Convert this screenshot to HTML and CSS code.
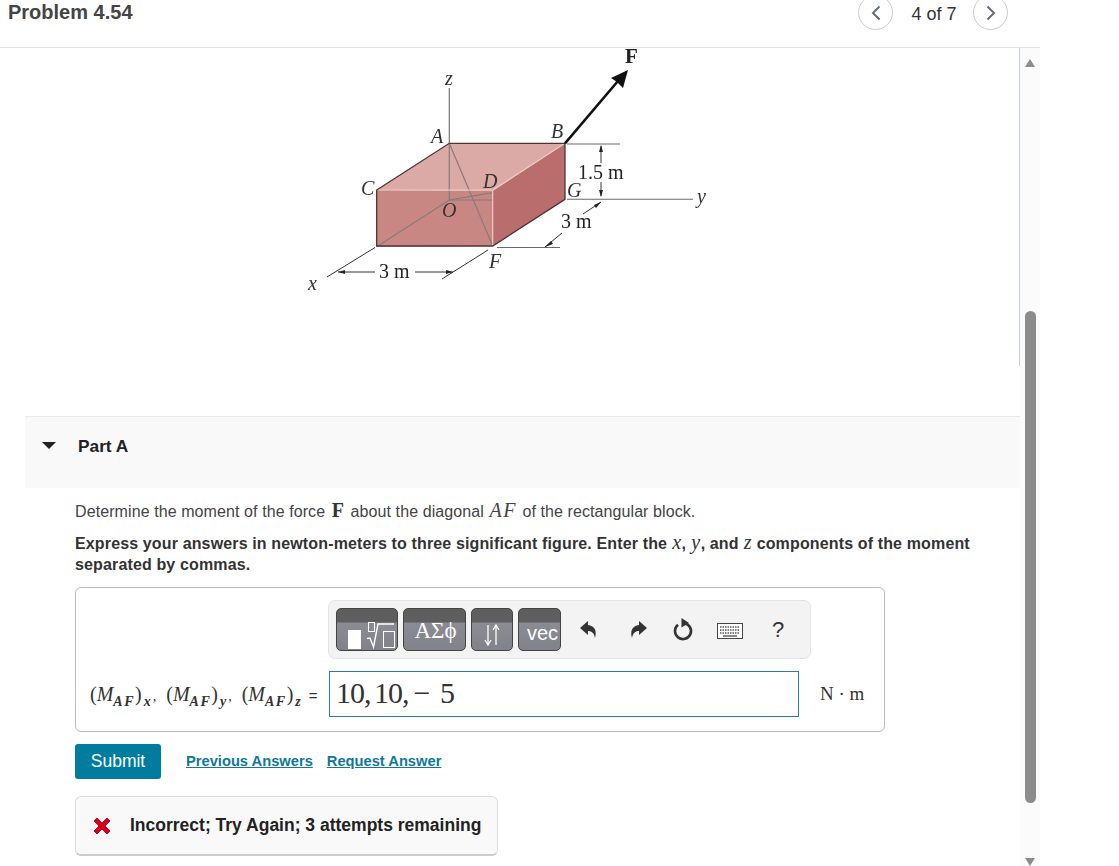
FILE: index.html
```html
<!DOCTYPE html>
<html lang="en">
<head>
    <meta charset="UTF-8">
    <title>Problem 4.54</title>
    <link rel="stylesheet" href="styles.css">
</head>
<body>

<div class="page">
    <header class="top-bar">
        <h1>Problem 4.54</h1>
        <div class="pager">
            <a class="pager-btn">
                <svg width="12" height="16" viewBox="0 0 12 16"><path d="M9.5 1.5 3 8l6.500 6.500" fill="none" stroke="#666d75" stroke-width="2"/></svg>
            </a>
            <span class="pager-text">4 of 7</span>
            <a class="pager-btn">
                <svg width="12" height="16" viewBox="0 0 12 16"><path d="M2.500 1.500 9 8l-6.500 6.500" fill="none" stroke="#666d75" stroke-width="2"/></svg>
            </a>
        </div>
    </header>

    <div class="content">
        <main class="main">
            <!-- Figura del bloque -->
            <div class="figure">
                <svg class="figure-svg" width="430" height="260" viewBox="290 48 430 260">
                    <polygon points="449.300,143.300 565,143.300 492.700,191 376.700,190" fill="#dcaaa6"/>
                    <polygon points="376.700,190 492.700,191 492.700,246 376.700,246.700" fill="#c98783"/>

                    <g stroke="#857c7b" stroke-width="1.200" fill="none">
                        <path d="M449.300 143.300V200"/>
                        <path d="M449.300 143.300 492.700 246"/>
                        <path d="M376.700 246.700 449.300 200 492.700 192.700"/>
                        <path d="M449.300 200H492.700"/>
                    </g>
                    <polygon points="492.700,191 565,143.300 565,199.300 492.700,246" fill="#b96d6c"/>
                    <g stroke="#ecc9c5" stroke-width="1.200" fill="none">
                        <path d="M376.700 190H492.700L565 143.300"/>
                        <path d="M492.700 191V246"/>
                    </g>
                    <g stroke="#4d3434" stroke-width="1.300" fill="none">
                        <path d="M376.700 190 449.300 143.300H565V199.300L492.700 246H376.700Z"/>
                    </g>

                    <!-- Ejes y cotas -->
                    <g stroke="#6a6a6a" stroke-width="1.100" fill="none">
                        <path d="M449.300 88V143"/>
                        <path d="M567 199.300H693"/>
                        <path d="M567 144H620"/>
                        <path d="M497 247.500H560"/>
                    </g>
                    <g stroke="#333" stroke-width="1" fill="none">
                        <path d="M327 277 375 247.500"/>
                        <path d="M442 279 488 250"/>
                        <path d="M338 272H375"/>
                        <path d="M415 272H453"/>
                        <path d="M545 247 562 233"/>
                        <path d="M583 214 601 202"/>
                        <path d="M601 146V163"/>
                        <path d="M601 182V196"/>
                    </g>
                    <g fill="#222">
                        <polygon points="338,272 345,270 345,274"/>
                        <polygon points="453,272 446,270 446,274"/>
                        <polygon points="545,247 551,241 553,244"/>
                        <polygon points="601,202 594,205 596,208"/>
                        <polygon points="601,145 599,152 603,152"/>
                        <polygon points="601,197 599,190 603,190"/>
                    </g>

                    <path d="M565 143.300 618 81" stroke="#111" stroke-width="2.600" fill="none"/>
                    <polygon points="628,70 623,88 617,82 611,78" fill="#111"/>

                    <text class="fig-label" x="445" y="85">z</text>
                    <text class="fig-label" x="431" y="143">A</text>
                    <text class="fig-label" x="551" y="138">B</text>
                    <text class="fig-label" x="361" y="195">C</text>
                    <text class="fig-label" x="483" y="188">D</text>
                    <text class="fig-label" x="442" y="217">O</text>
                    <text class="fig-label" x="567" y="197">G</text>
                    <text class="fig-label" x="489" y="268">F</text>
                    <text class="fig-label" x="308" y="290">x</text>
                    <text class="fig-label" x="697" y="203">y</text>
                    <text class="fig-num" x="578" y="179">1.5 m</text>
                    <text class="fig-num" x="561" y="228">3 m</text>
                    <text class="fig-num" x="379" y="278">3 m</text>
                    <text class="fig-bold" x="625" y="63">F</text>
                </svg>
            </div>

            <section class="part">
                <div class="part-head">
                    <span class="caret"></span>
                    <h2>Part A</h2>
                </div>

                <div class="part-body">
                    <p class="question">Determine the moment of the force <b class="math-bold">F</b> about the diagonal <i class="math">AF</i> of the rectangular block.</p>
                    <p class="instructions">Express your answers in newton-meters to three significant figure. Enter the <i class="math">x</i>, <i class="math">y</i>, and <i class="math">z</i> components of the moment separated by commas.</p>

                    <div class="answer-box">
                        <div class="toolbar">
                            <button class="tool tool-root">
                                <svg width="60" height="41" viewBox="0 0 60 41">
                                    <rect x="11" y="21" width="13" height="19" fill="#fff"/>
                                    <rect x="31.500" y="13.500" width="6" height="9" fill="none" stroke="#fff"/>
                                    <path d="M30 29.500l3-.5 3.500 9L41 15h16" fill="none" stroke="#fff" stroke-width="1.400"/>
                                    <rect x="46.500" y="22.500" width="11" height="16" fill="none" stroke="#fff"/>
                                </svg>
                            </button>
                            <button class="tool tool-greek">ΑΣϕ</button>
                            <button class="tool tool-arrows">
                                <svg width="20" height="24" viewBox="0 0 20 24">
                                    <path d="M6 2V22M3 17l3 5 3-5M14 22V2M11 7l3-5 3 5" fill="none" stroke="#fff" stroke-width="1.300"/>
                                </svg>
                            </button>
                            <button class="tool tool-vec">vec</button>

                            <span class="action action-undo">
                                <svg width="18" height="20" viewBox="0 0 18 20"><path d="M8 1 0 8l8 7v-4c4 0 6 2 7 7 2-7 0-12-7-13z" fill="#333"/></svg>
                            </span>
                            <span class="action action-redo">
                                <svg width="18" height="20" viewBox="0 0 18 20"><path d="M10 1l8 7-8 7v-4c-4 0-6 2-7 7-2-7 0-12 7-13z" fill="#333"/></svg>
                            </span>
                            <span class="action action-reset">
                                <svg width="22" height="24" viewBox="0 0 22 24">
                                    <path d="M12.500 5.200A8 8 0 1 1 6 6.800" fill="none" stroke="#333" stroke-width="2.600"/>
                                    <polygon points="9.500,0 17,5 9.500,9.500" fill="#333"/>
                                </svg>
                            </span>
                            <span class="action action-keys">
                                <svg width="26" height="16" viewBox="0 0 26 16">
                                    <rect x="0.500" y="0.500" width="25" height="15" fill="#fff" stroke="#444"/>
                                    <path d="M3 4h20M3 7h20M3 10h20" stroke="#555" stroke-width="1.400" stroke-dasharray="1.500 1"/>
                                    <path d="M6 13h14" stroke="#555" stroke-width="1.400"/>
                                </svg>
                            </span>
                            <span class="action action-help">?</span>
                        </div>

                        <div class="answer-row">
                            <span class="answer-label">(<i>M</i><sub class="sub-af"><i>AF</i></sub>)<sub><i>x</i></sub><small>,</small> (<i>M</i><sub class="sub-af"><i>AF</i></sub>)<sub><i>y</i></sub><small>,</small> (<i>M</i><sub class="sub-af"><i>AF</i></sub>)<sub><i>z</i></sub> <span class="eq">=</span></span>
                            <div class="answer-input">10, 10,<span class="minus">−</span> 5</div>
                            <span class="answer-unit">N · m</span>
                        </div>
                    </div>

                    <div class="submit-row">
                        <button class="submit-btn">Submit</button>
                        <a class="link prev-link">Previous Answers</a>
                        <a class="link">Request Answer</a>
                    </div>

                    <div class="feedback">
                        <svg width="20" height="20" viewBox="0 0 20 20"><path d="M2 5 5 2l5 5 5-5 3 3-5 5 5 5-3 3-5-5-5 5-3-3 5-5z" fill="#d0021b" stroke="#d0021b" stroke-linejoin="round"/></svg>
                        <span>Incorrect; Try Again; 3 attempts remaining</span>
                    </div>
                </div>
            </section>
        </main>

        <!-- Barra de scroll -->
        <div class="scrollbar">
            <span class="arrow-up"></span>
            <span class="thumb"></span>
            <span class="arrow-down"></span>
        </div>
    </div>
</div>

</body>
</html>
```

FILE: styles.css
```css
/* Estilos generales */
html, body {
    margin: 0;
    padding: 0;
    height: 866px;
    overflow: hidden;
    background-color: #fff;
}
body {
    font-family: "Liberation Sans", Arial, sans-serif;
    color: #333;
}
.page {
    width: 1040px;
}

/* Cabecera */
.top-bar {
    height: 47px;
    border-bottom: 1px solid #dcdfe3;
    display: flex;
    justify-content: space-between;
    align-items: flex-start;
    padding-left: 8px;
    padding-right: 32px;
}
.top-bar h1 {
    font-size: 20px;
    line-height: 22px;
    margin: 1px 0 0;
    color: #444;
}
.pager {
    display: flex;
    align-items: center;
    margin-top: -5px;
}
.pager-btn {
    width: 33px;
    height: 33px;
    border: 1px solid #ccc;
    border-radius: 50%;
    display: flex;
    align-items: center;
    justify-content: center;
}
.pager-text {
    font-size: 18px;
    width: 78px;
    padding-left: 2px;
    text-align: center;
    margin-top: 4px;
}

.content {
    display: flex;
    height: 818px;
}
.main {
    width: 1020px;
}

/* Figura */
.figure {
    height: 318px;
    margin-bottom: 50px;
    padding-left: 290px;
    border-right: 1px solid #c3cfdb;
    box-sizing: border-box;
}
.figure-svg {
    display: block;
    filter: blur(0.3px);
}
.fig-label {
    font: italic 20px "Liberation Serif", serif;
    fill: #333;
}
.fig-num {
    font: 20px "Liberation Serif", serif;
    fill: #222;
}
.fig-bold {
    font: bold 21px "Liberation Serif", serif;
    fill: #222;
}

/* Parte A */
.part-head {
    margin-left: 25px;
    height: 71px;
    background-color: #f9f9f9;
    border-top: 1px solid #e8e8e8;
    display: flex;
    align-items: flex-start;
}
.caret {
    width: 0;
    height: 0;
    border-left: 7px solid transparent;
    border-right: 7px solid transparent;
    border-top: 7px solid #222;
    margin: 25px 0 0 17px;
}
.part-head h2 {
    font-size: 17.300px;
    line-height: 22px;
    margin: 18px 0 0 22px;
    color: #222;
}
.part-body {
    padding: 13px 0 0 75px;
}
.question {
    margin: 0;
    font-size: 16px;
    line-height: 22px;
    letter-spacing: 0.090px;
    color: #444;
}
.math {
    font-family: "Liberation Serif", serif;
    font-size: 20px;
    line-height: 0;
    letter-spacing: 1.500px;
    margin: 0 1px;
}
.math-bold {
    font-family: "Liberation Serif", serif;
    font-size: 20px;
    line-height: 0;
    color: #333;
    margin: 0 2px;
}
.instructions {
    margin: 10px 0 0;
    font-size: 16px;
    line-height: 21px;
    letter-spacing: 0.140px;
    font-weight: bold;
    width: 910px;
}
.instructions .math {
    font-weight: normal;
    letter-spacing: 0;
    margin: 0 0.500px;
}

/* Caja de respuesta */
.answer-box {
    width: 808px;
    height: 143px;
    margin-top: 12px;
    border: 1px solid #bbb;
    border-radius: 6px;
}
.toolbar {
    width: 474px;
    height: 57px;
    margin: 12px 0 0 252px;
    background-color: #f3f3f3;
    border: 1px solid #e4e4e4;
    border-radius: 7px;
    display: flex;
    align-items: center;
    padding-left: 7px;
}
.tool {
    height: 43px;
    padding: 0;
    margin-right: 5px;
    border: 1px solid #444;
    border-radius: 5px;
    background: linear-gradient(#5e5e5e 0, #5e5e5e 13px, #8b8b93 14px, #82828a 100%);
    color: #fff;
    display: flex;
    align-items: flex-end;
    justify-content: center;
}
.tool-root { width: 62px; }
.tool-greek {
    width: 63px;
    padding-left: 2px;
    font: 23px/38px "Liberation Serif", serif;
}
.tool-arrows {
    width: 42px;
    padding-bottom: 3px;
}
.tool-vec {
    width: 43px;
    padding-left: 6px;
    font: 20px/34px "Liberation Sans", sans-serif;
    margin-right: 0;
}
.action {
    display: flex;
    align-items: center;
    justify-content: center;
    color: #333;
}
.action-undo { margin-left: 19px; width: 18px; }
.action-redo { margin-left: 31px; width: 18px; }
.action-reset { margin-left: 25px; width: 22px; }
.action-keys { margin-left: 23px; width: 26px; margin-top: 2px; }
.action-help {
    margin-left: 29px;
    font-size: 22px;
}

.answer-row {
    display: flex;
    align-items: center;
    margin-top: 12px;
    padding-left: 14px;
}
.answer-label {
    font-family: "Liberation Serif", serif;
    font-size: 20px;
    width: 239px;
    white-space: nowrap;
    color: #333;
}
.answer-label sub {
    font-size: 14px;
    font-weight: bold;
    line-height: 0;
    margin-left: 2px;
}
.answer-label .sub-af {
    letter-spacing: 1.500px;
    margin-left: 0;
}
.answer-label small {
    font-size: 14px;
    margin: 0 5px 0 2px;
}
.eq {
    font-family: "Liberation Sans", sans-serif;
    font-size: 15px;
    margin-left: 3px;
}
.answer-input {
    width: 462px;
    height: 44px;
    border: 1px solid #2b7f98;
    padding-left: 6px;
    font: 30px/42px "Liberation Serif", serif;
    letter-spacing: -1px;
    word-spacing: -3px;
    color: #333;
}
.minus {
    margin: 0 7px 0 5px;
}
.answer-unit {
    font: 19px "Liberation Serif", serif;
    margin-left: 21px;
    color: #333;
}

/* Botones */
.submit-row {
    display: flex;
    align-items: center;
    margin-top: 12px;
}
.submit-btn {
    width: 86px;
    height: 35px;
    padding: 0;
    border: none;
    border-radius: 3px;
    background-color: #007c9e;
    color: #fff;
    font: 17.500px "Liberation Sans", sans-serif;
}
.link {
    font-size: 14.700px;
    font-weight: bold;
    color: #10789a;
    text-decoration: underline;
    margin-left: 14px;
    margin-top: -2px;
}
.prev-link {
    margin-left: 25px;
}

/* Mensaje */
.feedback {
    width: 421px;
    height: 57px;
    margin-top: 17px;
    background-color: #f9f9f9;
    border: 1px solid #ddd;
    border-bottom: 2px solid #ccc;
    border-radius: 6px;
    display: flex;
    align-items: center;
    font-size: 17.500px;
    font-weight: bold;
    color: #222;
}
.feedback svg {
    margin-left: 16px;
    margin-right: 18px;
}

/* Scroll */
.scrollbar {
    width: 20px;
    background-color: #fbfbfb;
}
.arrow-up, .arrow-down {
    display: block;
    width: 0;
    height: 0;
    margin-left: 5px;
    border-left: 5.500px solid transparent;
    border-right: 5.500px solid transparent;
}
.arrow-up {
    border-bottom: 8px solid #8c8c8c;
    margin-top: 11px;
}
.arrow-down {
    border-top: 8px solid #8c8c8c;
    margin-top: 55px;
}
.thumb {
    display: block;
    width: 11px;
    height: 492px;
    margin: 244px 0 0 5px;
    background-color: #8c8c8c;
    border-radius: 6px;
}
```
